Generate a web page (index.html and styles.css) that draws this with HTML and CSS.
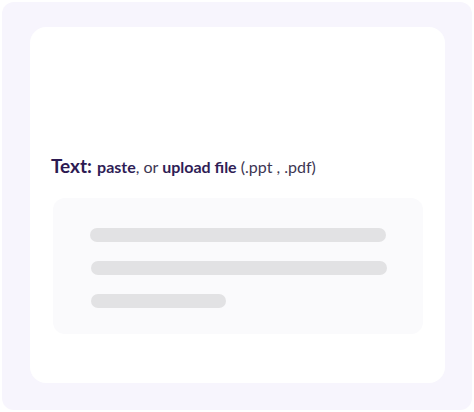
FILE: index.html
```html
<!DOCTYPE html>
<html>
<head>
<meta charset="utf-8">
<link rel="stylesheet" href="styles.css">
</head>
<body>
<div class="frame">
  <div class="card">
    <p class="label"><span class="title">Text:</span> <b>paste</b>, or <b>upload file</b> (.ppt , .pdf)</p>
    <div class="box">
      <div class="bar bar1"></div>
      <div class="bar bar2"></div>
      <div class="bar bar3"></div>
    </div>
  </div>
</div>
</body>
</html>
```

FILE: styles.css
```css
html, body {
  margin: 0;
  padding: 0;
  background: #ffffff;
}
body {
  width: 474px;
  height: 412px;
  font-family: Lato, "Open Sans", sans-serif;
}
.frame {
  box-sizing: border-box;
  margin: 2px 2px 2px 2px;
  width: 470px;
  height: 408px;
  background: #f7f5fd;
  border-radius: 12px;
  padding: 25px 27px 27px 28px;
}
.card {
  box-sizing: border-box;
  height: 356px;
  background: #ffffff;
  border-radius: 16px;
  padding-top: 129px;
}
.label {
  margin: 0 0 0 21px;
  font-size: 16px;
  line-height: 20px;
  color: #3d3652;
}
.label b {
  font-weight: 700;
  color: #2f1d56;
}
.title {
  font-size: 19px;
  font-weight: 700;
  color: #2c1a52;
  margin-right: 1px;
}
.box {
  box-sizing: border-box;
  margin: 21px 0 0 23px;
  width: 370px;
  height: 136px;
  background: #fafafc;
  border-radius: 12px;
  padding-top: 30px;
  display: flex;
  flex-direction: column;
  gap: 19px;
}
.bar {
  height: 14px;
  border-radius: 7px;
  background: #e2e2e4;
}
.bar1 { margin-left: 37px; width: 296px; }
.bar2 { margin-left: 38px; width: 296px; }
.bar3 { margin-left: 38px; width: 135px; }
```
